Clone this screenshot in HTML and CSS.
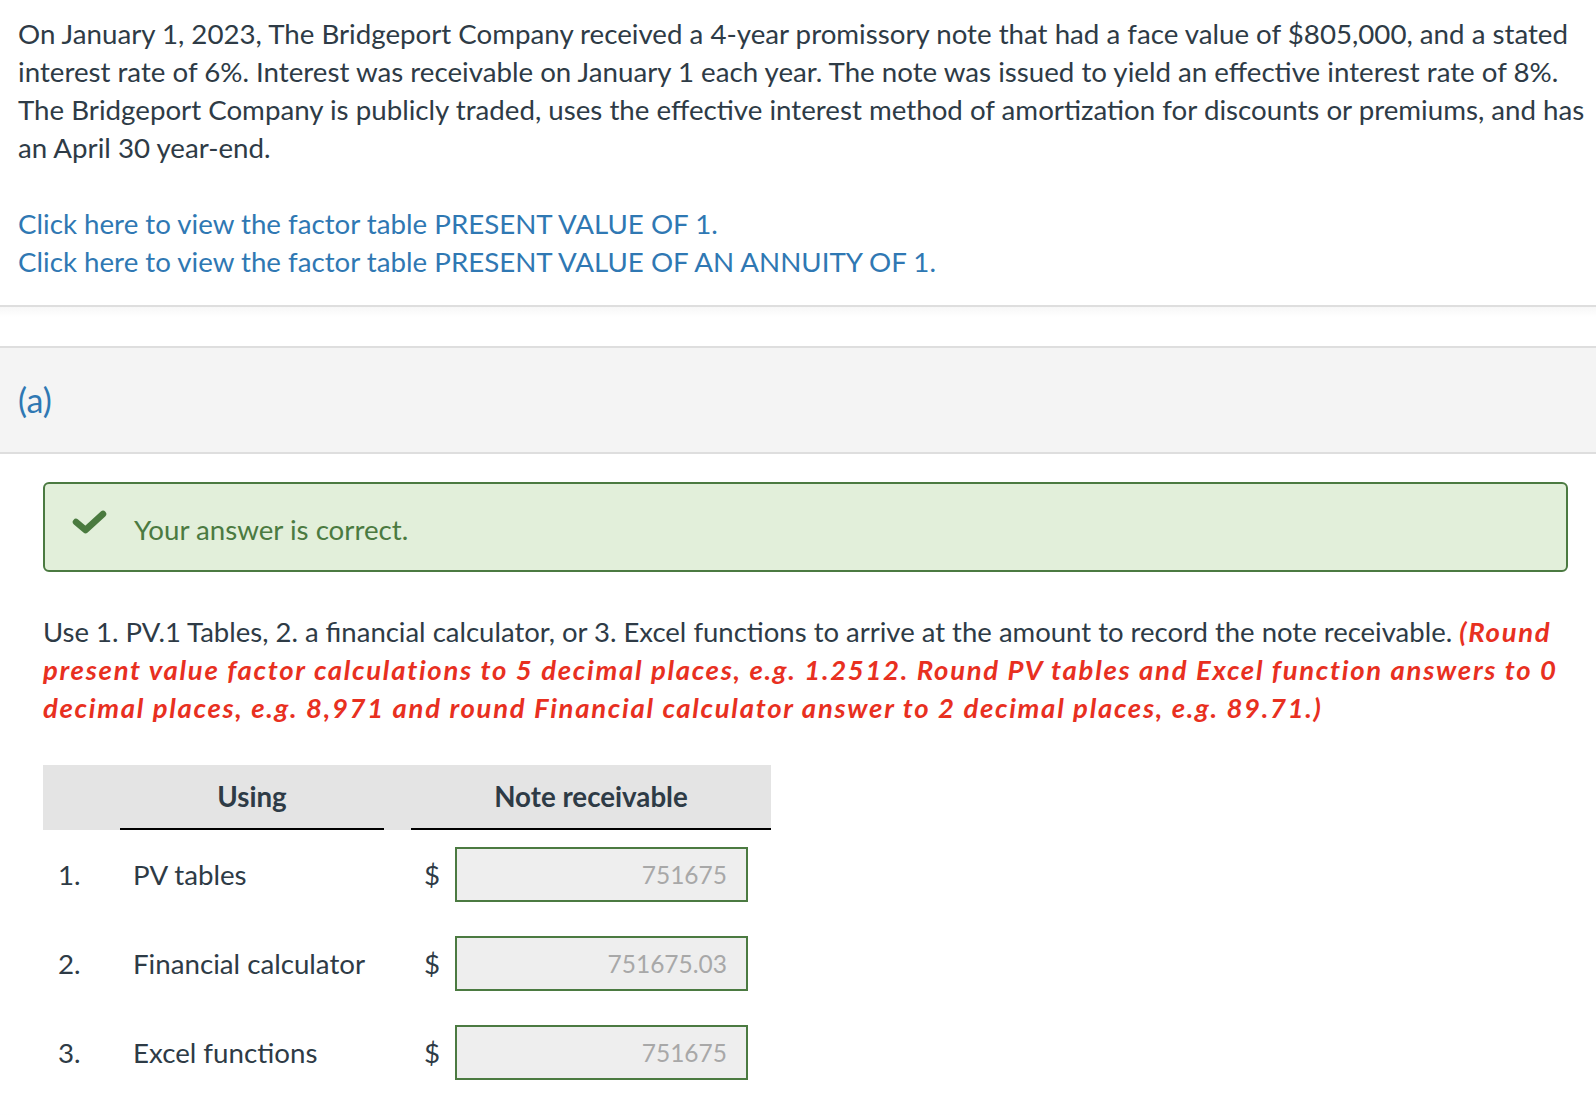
FILE: index.html
```html
<!DOCTYPE html>
<html lang="en">
<head>
	<meta charset="UTF-8">
	<title>Question</title>
	<link rel="stylesheet" href="styles.css">
</head>
<body>
	<div class="question">
		<p class="stem">On January 1, 2023, The Bridgeport Company received a 4-year promissory note that had a face value of $805,000, and a stated interest rate of 6%. Interest was receivable on January 1 each year. The note was issued to yield an effective interest rate of 8%. The Bridgeport Company is publicly traded, uses the effective interest method of amortization for discounts or premiums, and has an April 30 year-end.</p>
		<div class="links">
			<a href="#">Click here to view the factor table PRESENT VALUE OF 1.</a>
			<a href="#">Click here to view the factor table PRESENT VALUE OF AN ANNUITY OF 1.</a>
		</div>
	</div>
	<div class="spacer"></div>
	<div class="part-head">(a)</div>
	<div class="part">
		<div class="feedback">
			<svg class="check" width="35" height="24" viewBox="0 0 35 24">
				<path d="M4 12 L13.5 20 L31 4" fill="none" stroke="#4a7a3f" stroke-width="6.5" stroke-linecap="round" stroke-linejoin="round"/>
			</svg>
			<span>Your answer is correct.</span>
		</div>
		<p class="instr">Use 1. PV.1 Tables, 2. a financial calculator, or 3. Excel functions to arrive at the amount to record the note receivable. <em>(Round present value factor calculations to 5 decimal places, e.g. 1.2512. Round PV tables and Excel function answers to 0 decimal places, e.g. 8,971 and round Financial calculator answer to 2 decimal places, e.g. 89.71.)</em></p>
		<div class="grid">
			<div class="hd"></div>
			<div class="hd line">Using</div>
			<div class="hd"></div>
			<div class="hd line">Note receivable</div>

			<div class="num">1.</div>
			<div class="lbl">PV tables</div>
			<div></div>
			<div class="amt"><span>$</span><div class="box">751675</div></div>

			<div class="num">2.</div>
			<div class="lbl">Financial calculator</div>
			<div></div>
			<div class="amt"><span>$</span><div class="box">751675.03</div></div>

			<div class="num">3.</div>
			<div class="lbl">Excel functions</div>
			<div></div>
			<div class="amt"><span>$</span><div class="box">751675</div></div>
		</div>
	</div>
	<div class="foot"></div>
</body>
</html>
```
FILE: styles.css
```css
html,body{
	margin:0;
	padding:0;
}
body{
	background:#fff;
	color:#2e3b46;
	font-family:Lato,"Liberation Sans",sans-serif;
	font-size:27.7px;
	line-height:38px;
}
.question{
	padding:15px 2px 24px 18px;
	border-bottom:2px solid #dedede;
}
.stem{
	margin:0 0 38px;
}
.links a{
	display:block;
	color:#2f78b3;
	text-decoration:none;
}
.spacer{
	height:39px;
	background:linear-gradient(#f7f7f7,#fff 10px);
}
.part-head{
	background:#f4f4f4;
	border-top:2px solid #dedede;
	border-bottom:2px solid #dedede;
	color:#2f78b3;
	font-size:34px;
	padding:33px 18px 33px;
}
.part{
	padding:28px 28px 16px 43px;
}
.feedback{
	display:flex;
	align-items:center;
	height:86px;
	background:#e2efda;
	border:2px solid #4b7a41;
	border-radius:6px;
	color:#4b7a41;
}
.feedback span{
	position:relative;
	top:3px;
}
.feedback .check{
	margin:0 27px 0 27px;
	position:relative;
	top:-5px;
}
.instr{
	margin:41px 0 38px;
	font-size:27.5px;
}
.instr em{
	color:#e8301f;
	font-weight:bold;
	letter-spacing:1.7px;
}
.grid{
	display:grid;
	grid-template-columns:77px 264px 27px 360px;
	grid-template-rows:65px;
	grid-auto-rows:89px;
	align-items:center;
}
.grid .hd{
	background:#e4e4e4;
	height:100%;
	display:flex;
	align-items:center;
	justify-content:center;
	font-weight:bold;
	box-sizing:border-box;
}
.grid .hd.line{
	border-bottom:2px solid #000;
}
.grid .num{
	padding-left:15px;
}
.grid .lbl{
	padding-left:13px;
	white-space:nowrap;
}
.amt{
	display:flex;
	align-items:center;
}
.amt span{
	width:44px;
	padding-left:13px;
	box-sizing:border-box;
}
.box{
	width:293px;
	height:55px;
	box-sizing:border-box;
	border:2px solid #4b7a41;
	background:#eeeeee;
	color:#a8a8a8;
	font-size:24.5px;
	text-align:right;
	padding-right:19px;
	line-height:51px;
}
.foot{
	height:20px;
	background:linear-gradient(#fff,#f8f8f8);
}
```
